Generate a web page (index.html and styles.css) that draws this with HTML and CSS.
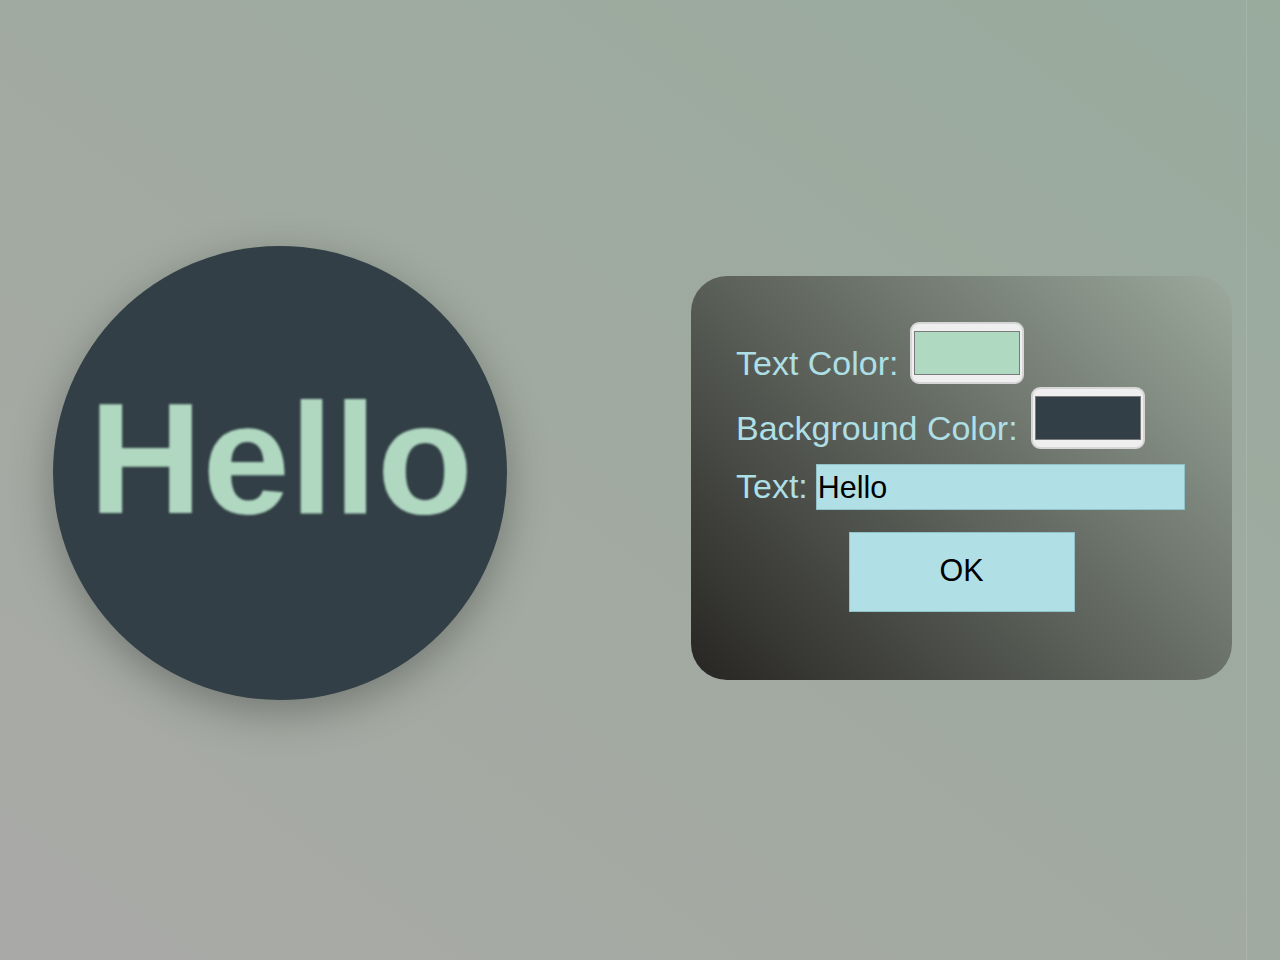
FILE: index.html
```html
<!DOCTYPE html>
<html lang="en">
<head>
<meta charset="utf-8">
<title>Hello badge</title>
<link rel="stylesheet" href="styles.css">
</head>
<body>
<main class="stage">
  <div class="badge"><span class="badge-text">Hello</span></div>
  <form class="panel">
    <div class="row row-tc">
      <label class="label" for="tc">Text Color:</label>
      <input id="tc" class="swatch" type="color" value="#b0d9c2">
    </div>
    <div class="row row-bg">
      <label class="label" for="bc">Background Color:</label>
      <input id="bc" class="swatch" type="color" value="#323f46">
    </div>
    <div class="row row-text">
      <label class="label" for="tx">Text:</label>
      <input id="tx" class="text-field" type="text" value="Hello">
    </div>
    <button class="ok" type="button">OK</button>
  </form>
</main>
</body>
</html>
```
FILE: styles.css
```css
html, body {
  margin: 0;
  padding: 0;
}
html {
  background: linear-gradient(to top right, #a9a9a7 0%, #a1aaa0 50%, #98ab9d 100%);
  min-height: 100%;
}
body {
  font-family: "Liberation Sans", Arial, sans-serif;
  height: 960px;
  overflow: hidden;
}
.stage {
  width: 1246px;
  height: 960px;
  border-right: 1px solid rgba(255, 255, 255, 0.12);
  display: flex;
  align-items: center;
}
.badge {
  width: 454px;
  height: 454px;
  flex: none;
  margin-left: 53px;
  margin-bottom: 14px;
  border-radius: 50%;
  background: #323f46;
  box-shadow: 0 12px 40px rgba(40, 45, 40, 0.38);
  display: flex;
  align-items: center;
  justify-content: center;
  box-sizing: border-box;
  padding-bottom: 30px;
  padding-left: 2px;
}
.badge-text {
  font-weight: bold;
  font-size: 157px;
  line-height: 1;
  color: #b0d8c1;
  filter: blur(0.9px);
}
.panel {
  margin: 0 0 4px 184px;
  width: 541px;
  height: 404px;
  flex: none;
  box-sizing: border-box;
  padding: 46px 45px 0 45px;
  border-radius: 36px;
  background: linear-gradient(45deg, #272523 0%, #9ca99c 100%);
  display: flex;
  flex-direction: column;
  align-items: flex-start;
}
.row {
  display: flex;
  align-items: flex-end;
}
.row-tc { gap: 11px; }
.row-bg { gap: 13px; margin-top: 3px; }
.row-text { gap: 8px; margin-top: 15px; align-items: center; }
.label {
  font-size: 34px;
  line-height: 39px;
  color: #addfe5;
  margin-bottom: 1px;
}
.row-text .label { margin-bottom: 2px; }
.swatch {
  -webkit-appearance: none;
  appearance: none;
  width: 114px;
  height: 62px;
  box-sizing: border-box;
  margin: 0;
  padding: 0;
  border: 2px solid #d6d6d6;
  border-radius: 9px;
  background: #efefef;
  cursor: pointer;
}
.swatch::-webkit-color-swatch-wrapper {
  padding: 7px 2px;
}
.swatch::-webkit-color-swatch {
  border: 1px solid #7a7a7a;
  border-radius: 0;
}
.text-field {
  width: 369px;
  height: 46px;
  box-sizing: border-box;
  margin: 0;
  padding: 0 0 0 1px;
  border: 1px solid #8fc3c9;
  background: #b0e0e6;
  color: #000;
  font-family: "Liberation Sans", Arial, sans-serif;
  font-size: 30.5px;
  outline: none;
}
.ok {
  align-self: center;
  margin-top: 22px;
  width: 226px;
  height: 80px;
  border: 1px solid #8fc3c9;
  background: #b0e0e6;
  color: #000;
  font-family: "Liberation Sans", Arial, sans-serif;
  font-size: 30.5px;
  padding: 0 0 3px 0;
}
```
